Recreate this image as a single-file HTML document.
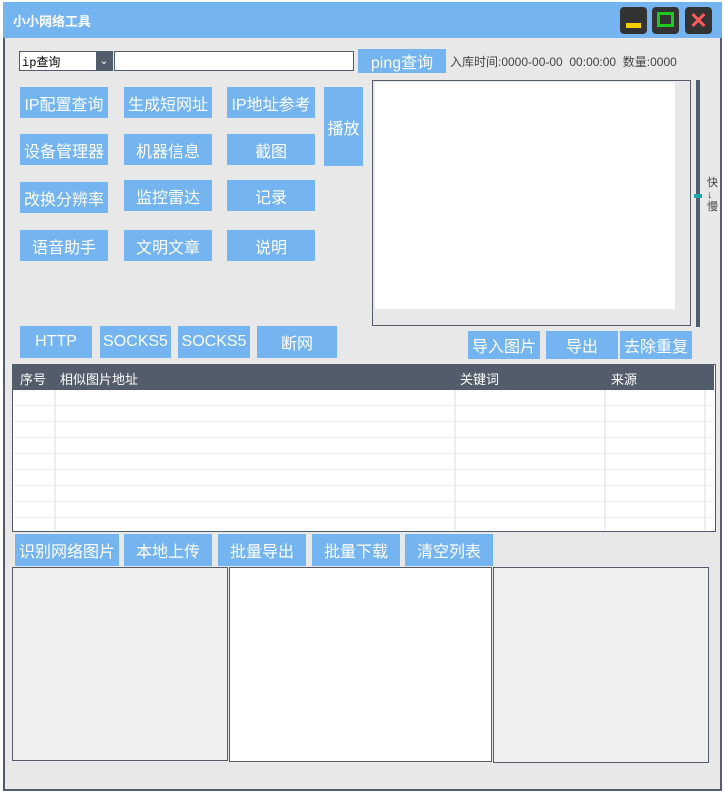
<!DOCTYPE html>
<html><head><meta charset="utf-8"><style>
*{margin:0;padding:0;box-sizing:border-box}
body{width:724px;height:793px;background:#fff;position:relative;overflow:hidden;font-family:"Liberation Sans","Noto Sans CJK SC",sans-serif}
.a{position:absolute}
.b{position:absolute;background:#74b4f0;color:#fff;font-size:16px;display:flex;align-items:center;justify-content:center;white-space:nowrap}
.ln{position:absolute;left:13px;width:701px;height:1px;background:#ececec}
.vl{position:absolute;top:390px;width:2px;height:140px;background:#eeeeee}
</style></head><body>
<div class="a" style="left:3px;top:2px;width:719px;height:789px;background:#e8e8e8;border:2px solid #525c6a;border-top:none"></div>
<div class="a" style="left:3px;top:2px;width:719px;height:36px;background:#74b4f0"></div>
<div class="a" style="left:13px;top:11px;color:#fff;font-size:13px;font-weight:bold">小小网络工具</div>
<div class="a" style="left:620px;top:7px;width:27px;height:27px;background:#333;border-radius:4px"><div class="a" style="left:6px;top:16px;width:15px;height:5px;background:#f5d000"></div></div>
<div class="a" style="left:652px;top:7px;width:27px;height:27px;background:#333;border-radius:4px"><div class="a" style="left:5px;top:5px;width:17px;height:15px;border:3px solid #1ec81e"></div></div>
<div class="a" style="left:685px;top:7px;width:27px;height:27px;background:#333;border-radius:4px;color:#ff5a5a;font-size:22px;font-weight:bold;text-align:center;line-height:27px">✕</div>

<div class="a" style="left:19px;top:51px;width:94px;height:20px;border:1px solid #525c6a;background:#fff"></div>
<div class="a" style="left:22px;top:53px;font-size:12px;font-family:'Liberation Mono','Noto Sans CJK SC',monospace">ip查询</div>
<div class="a" style="left:96px;top:52px;width:16px;height:18px;background:#525c6a;color:#fff;font-size:11px;text-align:center;line-height:18px">⌄</div>
<div class="a" style="left:114px;top:51px;width:240px;height:20px;border:1px solid #525c6a;background:#fff"></div>
<div class="b" style="left:358px;top:49px;width:88px;height:24px;font-size:16px">ping查询</div>
<div class="a" style="left:450px;top:53px;font-size:12px;color:#444">入库时间:0000-00-00&nbsp; 00:00:00&nbsp; 数量:0000</div>

<div class="b" style="left:20px;top:87px;width:88px;height:31px">IP配置查询</div>
<div class="b" style="left:20px;top:134px;width:88px;height:31px">设备管理器</div>
<div class="b" style="left:20px;top:182px;width:88px;height:31px">改换分辨率</div>
<div class="b" style="left:20px;top:230px;width:88px;height:31px">语音助手</div>
<div class="b" style="left:124px;top:87px;width:88px;height:31px">生成短网址</div>
<div class="b" style="left:124px;top:134px;width:88px;height:31px">机器信息</div>
<div class="b" style="left:124px;top:180px;width:88px;height:31px">监控雷达</div>
<div class="b" style="left:124px;top:230px;width:88px;height:31px">文明文章</div>
<div class="b" style="left:227px;top:87px;width:88px;height:31px">IP地址参考</div>
<div class="b" style="left:227px;top:134px;width:88px;height:31px">截图</div>
<div class="b" style="left:227px;top:180px;width:88px;height:31px">记录</div>
<div class="b" style="left:227px;top:230px;width:88px;height:31px">说明</div>
<div class="b" style="left:324px;top:87px;width:39px;height:79px">播放</div>

<div class="a" style="left:372px;top:80px;width:319px;height:246px;border:1px solid #525c6a;background:#e8e8e8"></div>
<div class="a" style="left:375px;top:82px;width:300px;height:227px;background:#fff"></div>
<div class="a" style="left:696px;top:80px;width:4px;height:247px;background:#525c6a"></div>
<div class="a" style="left:694px;top:194px;width:8px;height:4px;background:#1aa7b0"></div>
<div class="a" style="left:707px;top:177px;width:12px;font-size:11px;line-height:12px;color:#444">快<br>↓<br>慢</div>

<div class="b" style="left:20px;top:326px;width:72px;height:32px">HTTP</div>
<div class="b" style="left:100px;top:326px;width:71px;height:32px">SOCKS5</div>
<div class="b" style="left:178px;top:326px;width:72px;height:32px">SOCKS5</div>
<div class="b" style="left:257px;top:326px;width:80px;height:32px">断网</div>
<div class="b" style="left:468px;top:331px;width:72px;height:28px">导入图片</div>
<div class="b" style="left:546px;top:331px;width:72px;height:28px">导出</div>
<div class="b" style="left:620px;top:331px;width:72px;height:28px">去除重复</div>

<div class="a" style="left:12px;top:364px;width:704px;height:168px;border:1px solid #525c6a;background:#fff"></div>
<div class="a" style="left:13px;top:365px;width:701px;height:25px;background:#525c6a;color:#fff;font-size:13px">
<span class="a" style="left:7px;top:4px">序号</span><span class="a" style="left:47px;top:4px">相似图片地址</span><span class="a" style="left:447px;top:4px">关键词</span><span class="a" style="left:598px;top:4px">来源</span></div>
<div class="vl" style="left:54px"></div><div class="vl" style="left:454px"></div><div class="vl" style="left:604px"></div><div class="vl" style="left:704px"></div>
<div class="ln" style="top:405px"></div><div class="ln" style="top:421px"></div><div class="ln" style="top:437px"></div><div class="ln" style="top:453px"></div><div class="ln" style="top:469px"></div><div class="ln" style="top:485px"></div><div class="ln" style="top:501px"></div><div class="ln" style="top:517px"></div>

<div class="b" style="left:15px;top:534px;width:104px;height:32px">识别网络图片</div>
<div class="b" style="left:124px;top:534px;width:88px;height:32px">本地上传</div>
<div class="b" style="left:218px;top:534px;width:88px;height:32px">批量导出</div>
<div class="b" style="left:312px;top:534px;width:88px;height:32px">批量下载</div>
<div class="b" style="left:405px;top:534px;width:88px;height:32px">清空列表</div>

<div class="a" style="left:12px;top:567px;width:216px;height:194px;border:1px solid #525c6a;background:#efefef"></div>
<div class="a" style="left:229px;top:567px;width:263px;height:195px;border:1px solid #525c6a;background:#fff"></div>
<div class="a" style="left:493px;top:567px;width:216px;height:196px;border:1px solid #525c6a;background:#efefef"></div>
</body></html>
